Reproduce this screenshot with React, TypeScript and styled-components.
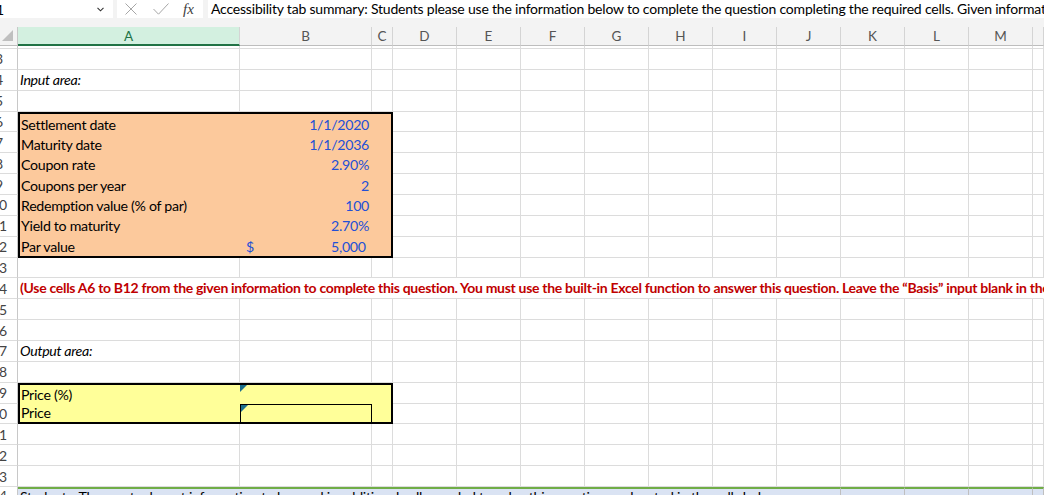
import * as React from "react";
import styled, { createGlobalStyle } from "styled-components";

const FONT = `"Lato", "Liberation Sans", sans-serif`;
const ROW_H = 20.86;
const GRID = "#dcdcdc";

const COLS = ["A", "B", "C", "D", "E", "F", "G", "H", "I", "J", "K", "L", "M", "N"];
const ROWS = Array.from({ length: 23 }, (_, i) => i + 2);

// grid column of a sheet column (row header is column 1)
const colOf = (k: string) => COLS.indexOf(k) + 2;

const GlobalStyle = createGlobalStyle`
  html, body {
    margin: 0;
    padding: 0;
    background: #ffffff;
    overflow: hidden;
  }
  * {
    box-sizing: border-box;
  }
`;

const Screen = styled.div`
  width: 1044px;
  height: 495px;
  overflow: hidden;
  display: flex;
  flex-direction: column;
  font-family: ${FONT};
  background: #ffffff;
`;

const FormulaBar = styled.div`
  height: 27px;
  flex: none;
  display: flex;
  align-items: flex-start;
  background: #f3f3f3;
`;

const NameBox = styled.div`
  width: 113px;
  height: 18px;
  background: #ffffff;
  display: flex;
  align-items: center;
  justify-content: space-between;
  padding-right: 9px;
  font-size: 14px;
  color: #000;
`;

const NameText = styled.span`
  margin-left: -4px;
`;

const IconBox = styled.div`
  width: 86px;
  height: 18px;
  margin-left: 4px;
  background: #ffffff;
  display: flex;
  align-items: center;
  padding-left: 8px;
  gap: 16px;
`;

const Fx = styled.span`
  margin-left: -2px;
  font-family: "Liberation Serif", serif;
  font-style: italic;
  font-size: 15px;
  color: #404040;
`;

const FormulaInput = styled.div`
  flex: 1;
  height: 18px;
  margin-left: 5px;
  background: #ffffff;
  padding-left: 3px;
  font-size: 14px;
  letter-spacing: -0.2px;
  line-height: 17px;
  color: #000;
  white-space: nowrap;
  overflow: hidden;
`;

const Sheet = styled.div`
  flex: 1;
  display: grid;
  grid-template-columns: 18px 222px 132px 21px repeat(10, 64px) 1fr;
  grid-template-rows: 19px 3px repeat(21, ${ROW_H}px) 1fr;
  font-size: 14.2px;
  letter-spacing: -0.3px;
`;

const Corner = styled.div`
  grid-row: 1;
  grid-column: 1;
  background: #f3f3f3;
  border-right: 1px solid #c8c8c8;
  border-bottom: 1px solid #bdbdbd;
  display: flex;
  align-items: flex-end;
  justify-content: flex-end;
  padding: 0 4px 4px 0;
`;

const ColHeader = styled.div<{ $c: number; $active?: boolean }>`
  grid-row: 1;
  grid-column: ${(p) => p.$c};
  display: flex;
  align-items: center;
  justify-content: center;
  font-size: 13.5px;
  letter-spacing: 0;
  background: ${(p) => (p.$active ? "#d3f0e0" : "#f3f3f3")};
  color: ${(p) => (p.$active ? "#217346" : "#555555")};
  border-right: 1px solid #d4d4d4;
  border-bottom: ${(p) => (p.$active ? "2px solid #217346" : "1px solid #bdbdbd")};
`;

const RowHeader = styled.div<{ $r: number }>`
  grid-row: ${(p) => p.$r};
  grid-column: 1;
  overflow: hidden;
  display: flex;
  align-items: center;
  background: #ffffff;
  border-right: 1px solid #c8c8c8;
  border-bottom: 1px solid ${GRID};
  font-size: 14px;
  letter-spacing: 0;
  color: #444444;
`;

const RowNum = styled.span`
  flex: none;
  width: 38px;
  margin-left: -20px;
  text-align: center;
`;

const Cell = styled.div<{ $r: number; $c: number; $span?: number; $line?: string }>`
  grid-row: ${(p) => p.$r};
  grid-column: ${(p) => p.$c} / span ${(p) => p.$span ?? 1};
  min-width: 0;
  display: flex;
  align-items: flex-end;
  padding: 0 2px 2px;
  white-space: nowrap;
  background: #ffffff;
  border-right: 1px solid ${(p) => p.$line ?? GRID};
  border-bottom: 1px solid ${GRID};
`;

const Label = styled.span<{ $italic?: boolean }>`
  color: #000000;
  font-style: ${(p) => (p.$italic ? "italic" : "normal")};
`;

const Note = styled.span`
  color: #c00000;
  font-weight: 700;
  font-size: 14px;
  letter-spacing: -0.3px;
`;

const Block = styled.div<{ $from: number; $to: number; $fill: string }>`
  grid-row: ${(p) => p.$from} / ${(p) => p.$to + 1};
  grid-column: 2 / 5;
  display: grid;
  grid-template-columns: 220px 132px 1fr;
  grid-auto-rows: 1fr;
  background: ${(p) => p.$fill};
  border: 2px solid #000000;
`;

const BlockCell = styled.div<{ $boxed?: boolean }>`
  position: relative;
  display: flex;
  align-items: flex-end;
  justify-content: space-between;
  padding: 0 3px 1px 1px;
  white-space: nowrap;
  border: ${(p) => (p.$boxed ? "1px solid #000000" : "none")};
  border-bottom: none;
`;

const Value = styled.span`
  margin-left: auto;
  color: #2350d6;
`;

const Currency = styled.span`
  color: #2350d6;
  padding-left: 5px;
`;

const Marker = styled.span`
  position: absolute;
  top: 0;
  left: 0;
  width: 0;
  height: 0;
  border-top: 7px solid #1c6f8c;
  border-right: 7px solid transparent;
`;

const Banner = styled.div<{ $c: number; $span: number; $line: string }>`
  grid-row: 24;
  grid-column: ${(p) => p.$c} / span ${(p) => p.$span};
  background: #dae3f3;
  border-top: 2px solid #70ad47;
  border-right: 1px solid ${(p) => p.$line};
  padding: 0 2px;
  line-height: 16px;
  white-space: nowrap;
  overflow: hidden;
  color: #000000;
`;

const inputs: { label: string; value: string; currency?: boolean }[] = [
  { label: "Settlement date", value: "1/1/2020" },
  { label: "Maturity date", value: "1/1/2036" },
  { label: "Coupon rate", value: "2.90%" },
  { label: "Coupons per year", value: "2" },
  { label: "Redemption value (% of par)", value: "100" },
  { label: "Yield to maturity", value: "2.70%" },
  { label: "Par value", value: "5,000\u00a0", currency: true },
];

const covered = (r: number, c: number) => {
  if (r >= 6 && r <= 12 && c <= 4) return true;
  if (r >= 19 && r <= 20 && c <= 4) return true;
  if (r === 14) return true;
  if (r === 24) return true;
  return false;
};

const cellText: Record<string, React.ReactNode> = {
  "4-2": <Label $italic>Input area:</Label>,
  "17-2": <Label $italic>Output area:</Label>,
};

const App = () => {
  return (
    <Screen>
      <GlobalStyle />
      <FormulaBar>
        <NameBox>
          <NameText>1</NameText>
          <svg width="7" height="5" viewBox="0 0 7 5">
            <path d="M0.5 0.8 L3.5 3.8 L6.5 0.8" fill="none" stroke="#333" strokeWidth="1.1" />
          </svg>
        </NameBox>
        <IconBox>
          <svg width="12" height="12" viewBox="0 0 12 12">
            <path d="M0.5 0.5 L11.5 11.5 M11.5 0.5 L0.5 11.5" stroke="#a6a6a6" strokeWidth="1" />
          </svg>
          <svg width="16" height="12" viewBox="0 0 16 12">
            <path d="M0.5 6 L5.5 11.2 L15.5 0.5" fill="none" stroke="#a6a6a6" strokeWidth="1" />
          </svg>
          <Fx>fx</Fx>
        </IconBox>
        <FormulaInput>
          Accessibility tab summary: Students please use the information below to complete the question
          completing the required cells. Given information is provided in cells A6 to B12.
        </FormulaInput>
      </FormulaBar>

      <Sheet>
        <Corner>
          <svg width="11" height="11" viewBox="0 0 11 11">
            <path d="M11 0 L11 11 L0 11 Z" fill="#bfbfbf" />
          </svg>
        </Corner>
        {COLS.map((k) => (
          <ColHeader key={k} $c={colOf(k)} $active={k === "A"}>
            {k === "N" ? "" : k}
          </ColHeader>
        ))}

        {ROWS.map((r) => (
          <RowHeader key={`h${r}`} $r={r}>
            <RowNum>{r === 2 ? "" : r}</RowNum>
          </RowHeader>
        ))}

        {ROWS.flatMap((r) =>
          COLS.map((k) => {
            const c = colOf(k);
            if (covered(r, c)) return null;
            return (
              <Cell key={`${r}-${k}`} $r={r} $c={c}>
                {cellText[`${r}-${c}`]}
              </Cell>
            );
          })
        )}

        <Block $from={6} $to={12} $fill="#fcc99c">
          {inputs.map((row) => (
            <React.Fragment key={row.label}>
              <BlockCell>
                <Label>{row.label}</Label>
              </BlockCell>
              <BlockCell>
                {row.currency && <Currency>$</Currency>}
                <Value>{row.value}</Value>
              </BlockCell>
              <BlockCell />
            </React.Fragment>
          ))}
        </Block>

        <Cell $r={14} $c={2} $span={14} $line="transparent">
          <Note>
            (Use cells A6 to B12 from the given information to complete this question. You must use the
            built-in Excel function to answer this question. Leave the “Basis” input blank in the function.)
          </Note>
        </Cell>

        <Block $from={19} $to={20} $fill="#ffff99">
          <BlockCell>
            <Label>Price (%)</Label>
          </BlockCell>
          <BlockCell>
            <Marker />
          </BlockCell>
          <BlockCell />
          <BlockCell>
            <Label>Price</Label>
          </BlockCell>
          <BlockCell $boxed>
            <Marker />
          </BlockCell>
          <BlockCell />
        </Block>

        <Banner $c={2} $span={10} $line="#bfbfbf">
          Students: The most relevant information to be used in additional cells needed to solve this
          question are located in the cells below.
        </Banner>
        {["K", "L", "M", "N"].map((k) => (
          <Banner key={k} $c={colOf(k)} $span={1} $line="#bfbfbf" />
        ))}
      </Sheet>
    </Screen>
  );
};

export default App;
